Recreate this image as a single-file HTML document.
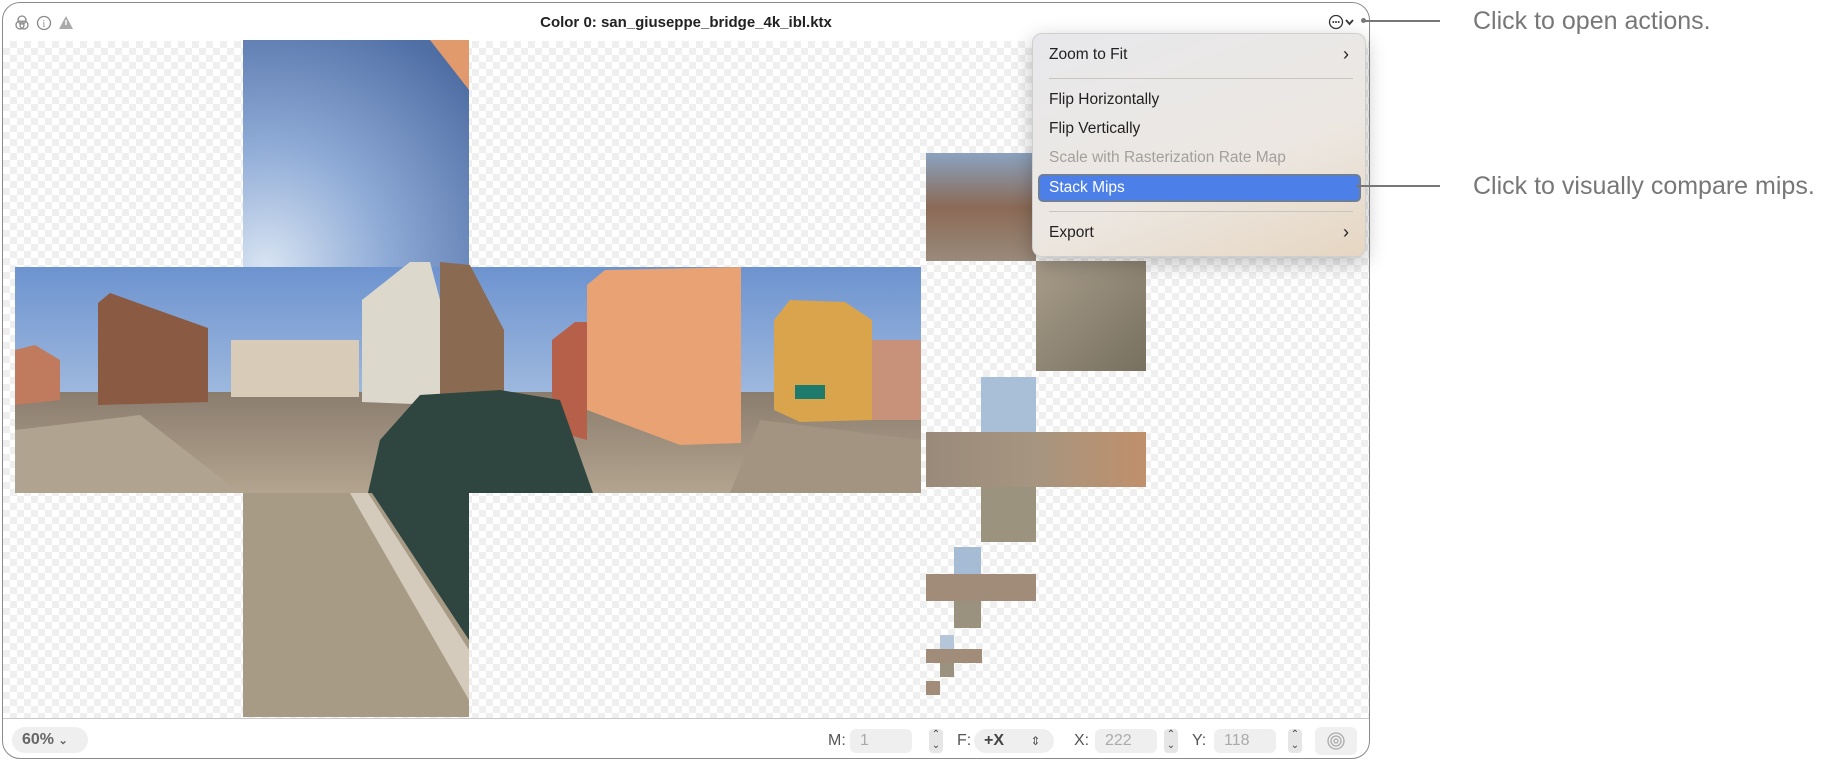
<!DOCTYPE html>
<html><head><meta charset="utf-8"><style>
*{margin:0;padding:0;box-sizing:border-box}
body{width:1840px;height:762px;background:#fff;font-family:"Liberation Sans",sans-serif;position:relative;overflow:hidden}
.win{position:absolute;left:2px;top:2px;width:1368px;height:757px;border:1.5px solid #8a8a8a;border-radius:18px;overflow:hidden;background:#fff}
.canvas{position:absolute;left:0;top:38px;width:100%;height:678px;background-color:#fff;background-image:repeating-conic-gradient(#efefef 0 25%,#fff 0 50%);background-size:14px 14px;border-bottom:1px solid #c8c8c8}
.abs{position:absolute}
.title{position:absolute;left:0;top:11px;width:100%;text-align:center;font-weight:bold;font-size:15px;color:#222}
.menu{position:absolute;left:1030px;top:31px;width:334px;height:224px;border-radius:10px;background:linear-gradient(160deg,#e8e8ec 0%,#ece7e1 60%,#e6d6c2 100%);box-shadow:0 6px 20px rgba(0,0,0,.25);border:1px solid #cfcfcf}
.mi{position:absolute;left:16px;font-size:15.5px;color:#222}
.sep{position:absolute;left:16px;right:12px;height:1px;background:#c9c6c2}
.ann{position:absolute;font-size:25px;color:#777}
.line{position:absolute;height:1.5px;background:#777}
.fld{position:absolute;top:727px;height:24px;border-radius:6px;background:#efefef;font-size:16px;color:#aaa;padding:3px 10px}
.lbl{position:absolute;top:730px;font-size:16px;color:#555}
.step{position:absolute;top:727px;width:14px;height:24px;border-radius:4px;background:#e6e6e6;font-size:10px;color:#444;text-align:center;line-height:11px}
</style></head><body>
<div class="win">
 <div class="title">Color 0: san_giuseppe_bridge_4k_ibl.ktx</div>
 <svg class="abs" style="left:12px;top:11px" width="60" height="18">
  <g fill="none" stroke="#888" stroke-width="1.3"><circle cx="7" cy="6" r="4"/><circle cx="5" cy="11" r="4"/><circle cx="9" cy="11" r="4"/><circle cx="29" cy="9" r="6.5"/></g>
  <text x="27.5" y="13" font-size="10" fill="#888" font-family="Liberation Serif">i</text>
  <path d="M51 2 L58 15 L44 15 Z" fill="#aaa"/><rect x="50.3" y="6" width="1.4" height="5" fill="#fff"/>
 </svg>
 <div class="canvas">
  <div class="abs" style="left:1033px;top:220px;width:110px;height:110px;background:linear-gradient(135deg,#a89c8a,#77705f)"></div>
  <div class="abs" style="left:923px;top:112px;width:110px;height:108px;background:linear-gradient(180deg,#8aa3c0,#8b6a56 50%,#9a8a7a)"></div>
  <div class="abs" style="left:978px;top:336px;width:55px;height:55px;background:#a9bfd8"></div>
  <div class="abs" style="left:923px;top:391px;width:220px;height:55px;background:linear-gradient(90deg,#9a8a7a,#a69580,#c0906b)"></div>
  <div class="abs" style="left:978px;top:446px;width:55px;height:55px;background:#9c937f"></div>
  <div class="abs" style="left:951px;top:506px;width:27px;height:27px;background:#a6bcd4"></div>
  <div class="abs" style="left:923px;top:533px;width:110px;height:27px;background:#a08c78"></div>
  <div class="abs" style="left:951px;top:560px;width:27px;height:27px;background:#9b917f"></div>
  <div class="abs" style="left:937px;top:594px;width:14px;height:14px;background:#b6c6da"></div>
  <div class="abs" style="left:923px;top:608px;width:56px;height:14px;background:#a08c78"></div>
  <div class="abs" style="left:937px;top:622px;width:14px;height:14px;background:#9b917f"></div>
  <div class="abs" style="left:923px;top:640px;width:14px;height:14px;background:#a08c78"></div>
 </div>
</div>
<svg class="abs" style="left:0;top:0" width="1000" height="720">
 <defs>
  <radialGradient id="sky" cx="0.1" cy="1" r="1.2"><stop offset="0" stop-color="#d8e4f2"/><stop offset="0.45" stop-color="#8eaad6"/><stop offset="1" stop-color="#4f6ea4"/></radialGradient>
  <linearGradient id="sky2" x1="0" y1="0" x2="0" y2="1"><stop offset="0" stop-color="#6d93cf"/><stop offset="1" stop-color="#c5d6ea"/></linearGradient>
  <linearGradient id="gr" x1="0" y1="0" x2="0" y2="1"><stop offset="0" stop-color="#8b7d6e"/><stop offset="1" stop-color="#b3a48f"/></linearGradient>
 </defs>
 <rect x="243" y="40" width="226" height="227" fill="url(#sky)"/>
 <path d="M430 40 L469 40 L469 90 Z" fill="#e09a6c"/>
 <rect x="15" y="267" width="906" height="226" fill="url(#sky2)"/>
 <rect x="15" y="392" width="906" height="101" fill="url(#gr)"/>
 <path d="M15 350 L35 345 L60 360 L60 400 L15 405Z" fill="#c07a5e"/>
 <path d="M98 303 L110 293 L208 328 L208 402 L98 405Z" fill="#8a5a42"/>
 <rect x="231" y="340" width="128" height="57" fill="#d8ccb8"/>
 <path d="M362 300 L410 262 L430 262 L440 300 L440 405 L362 402Z" fill="#ddd8cc"/>
 <path d="M440 262 L470 265 L504 330 L504 408 L440 408Z" fill="#8a6a50"/>
 <path d="M552 340 L575 322 L587 322 L587 440 L552 430Z" fill="#b6604a"/>
 <path d="M587 285 L605 270 L741 267 L741 443 L680 445 L587 410Z" fill="#e8a274"/>
 <path d="M774 320 L790 300 L845 302 L872 320 L872 420 L800 422 L774 410Z" fill="#d9a44c"/>
 <rect x="872" y="340" width="49" height="80" fill="#c8927a"/>
 <rect x="795" y="385" width="30" height="14" fill="#1e7a6a"/>
 <path d="M368 493 L380 440 L420 395 L500 390 L560 400 L593 493Z" fill="#2f4540"/>
 <path d="M15 430 L140 415 L240 493 L15 493Z" fill="#b0a38f"/>
 <path d="M730 493 L760 420 L921 440 L921 493Z" fill="#a29480"/>
 <rect x="243" y="493" width="226" height="224" fill="#a89b86"/>
 <path d="M372 493 L469 493 L469 640 Z" fill="#2f4540"/>
 <path d="M350 493 L368 493 L469 650 L469 700 Z" fill="#d4cbbd"/>
</svg>
<div class="abs" style="left:2px;top:2px;width:1368px;height:757px;pointer-events:none">
 <div class="abs" style="left:10px;top:725px;width:76px;height:26px;border-radius:13px;background:#efefef;font-size:16px;font-weight:bold;color:#666;padding:4px 10px">60% <span style="font-size:11px">&#8964;</span></div>
 <div class="lbl" style="left:826px">M:</div><div class="fld" style="left:848px;width:62px">1</div><div class="step" style="left:927px">&#8963;<br>&#8964;</div>
 <div class="lbl" style="left:955px">F:</div><div class="fld" style="left:972px;width:80px;border-radius:12px;color:#444;font-weight:bold">+X <span style="font-weight:normal;color:#555;margin-left:22px;font-size:12px">&#8661;</span></div>
 <div class="lbl" style="left:1072px">X:</div><div class="fld" style="left:1093px;width:62px">222</div><div class="step" style="left:1162px">&#8963;<br>&#8964;</div>
 <div class="lbl" style="left:1190px">Y:</div><div class="fld" style="left:1212px;width:62px">118</div><div class="step" style="left:1286px">&#8963;<br>&#8964;</div>
 <div class="abs" style="left:1313px;top:725px;width:42px;height:28px;border-radius:6px;background:#f0f0f0"><svg width="42" height="28"><g fill="none" stroke="#aaa" stroke-width="1.3"><circle cx="21" cy="14" r="8"/><circle cx="21" cy="14" r="5"/><circle cx="21" cy="14" r="2"/></g></svg></div>
 <svg class="abs" style="left:1325px;top:11px" width="34" height="18"><circle cx="9" cy="9" r="6.5" fill="none" stroke="#333" stroke-width="1.3"/><g fill="#333"><circle cx="6.3" cy="9" r="1"/><circle cx="9" cy="9" r="1"/><circle cx="11.7" cy="9" r="1"/></g><path d="M19 7 L22.5 11 L26 7" fill="none" stroke="#333" stroke-width="1.8"/></svg>
 <div class="menu">
  <div class="mi" style="top:12px">Zoom to Fit</div><div class="mi" style="top:10px;left:auto;right:16px;font-size:18px">›</div>
  <div class="sep" style="top:44px"></div>
  <div class="mi" style="top:57px">Flip Horizontally</div>
  <div class="mi" style="top:86px">Flip Vertically</div>
  <div class="mi" style="top:115px;color:#a3a09c">Scale with Rasterization Rate Map</div>
  <div class="abs" style="left:5px;top:140px;width:323px;height:28px;border-radius:5px;background:#4d7fe8;border:2px solid #6c7e98"></div>
  <div class="mi" style="top:145px;color:#fff">Stack Mips</div>
  <div class="sep" style="top:177px"></div>
  <div class="mi" style="top:190px">Export</div><div class="mi" style="top:188px;left:auto;right:16px;font-size:18px">›</div>
 </div>
</div>
<div class="line" style="left:1364px;top:20px;width:76px"></div><div class="abs" style="left:1361px;top:18px;width:5px;height:5px;border-radius:50%;background:#777"></div>
<div class="ann" style="left:1473px;top:7px">Click to open actions.</div>
<div class="line" style="left:1356px;top:185px;width:84px"></div>
<div class="ann" style="left:1473px;top:172px">Click to visually compare mips.</div>
</body></html>
